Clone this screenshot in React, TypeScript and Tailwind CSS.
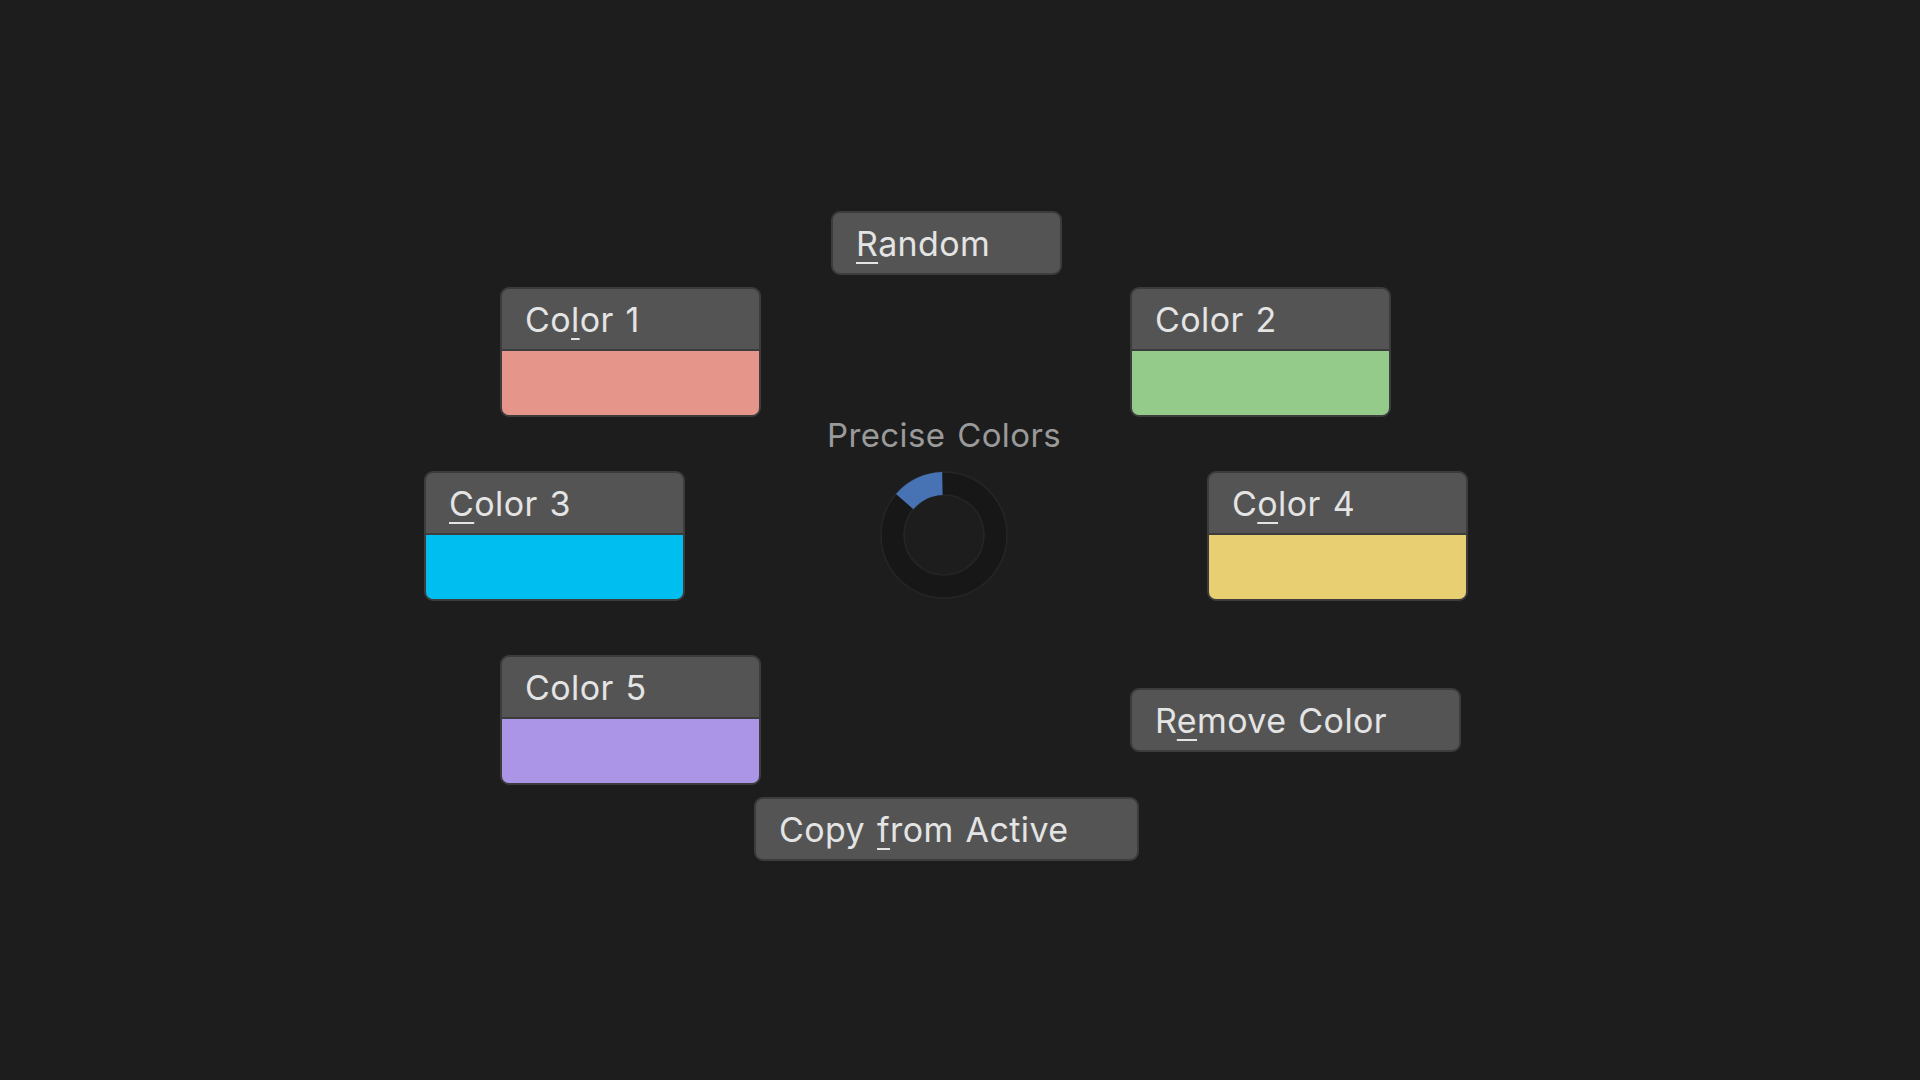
import React from "react";

type Mn = { pre: string; key: string; post: string };

// Blender-style mnemonic label: one letter underlined
const Label: React.FC<{ m: Mn }> = ({ m }) => (
  <span className="whitespace-pre tracking-[0.4px] [word-spacing:2px]">
    {m.pre}
    {m.key && (
      <span className="underline decoration-2 underline-offset-[6px]">{m.key}</span>
    )}
    {m.post}
  </span>
);

const PieButton: React.FC<{ m: Mn; className: string }> = ({ m, className }) => (
  <div
    className={`absolute flex h-[64px] items-center rounded-[9px] border-2 border-[#3c3c3c] bg-[#545454] pl-[23px] text-[34px] text-[#e4e4e4] ${className}`}
  >
    <Label m={m} />
  </div>
);

const ColorSlot: React.FC<{ m: Mn; color: string; className: string }> = ({
  m,
  color,
  className,
}) => (
  <div
    className={`absolute flex h-[130px] w-[261px] flex-col overflow-hidden rounded-[9px] border-2 border-[#3c3c3c] bg-[#545454] text-[34px] text-[#e4e4e4] ${className}`}
  >
    <div className="flex h-[62px] items-center border-b-2 border-[#3c3c3c] pl-[23px]">
      <Label m={m} />
    </div>
    <div className="flex-1" style={{ backgroundColor: color }} />
  </div>
);

export default function App() {
  return (
    <div
      className="relative h-[1080px] w-[1920px] overflow-hidden bg-[#1d1d1d]"
      style={{ fontFamily: "Inter, 'Noto Sans', sans-serif" }}
    >
      {/* pie items: positions around the pie centre are the content */}
      <PieButton m={{ pre: "", key: "R", post: "andom" }} className="left-[831px] top-[211px] w-[231px]" />

      <ColorSlot m={{ pre: "Co", key: "l", post: "or 1" }} color="#e6958a" className="left-[500px] top-[287px]" />
      <ColorSlot m={{ pre: "Color 2", key: "", post: "" }} color="#94ca8a" className="left-[1130px] top-[287px]" />
      <ColorSlot m={{ pre: "", key: "C", post: "olor 3" }} color="#00bef0" className="left-[424px] top-[471px]" />
      <ColorSlot m={{ pre: "C", key: "o", post: "lor 4" }} color="#e7cf72" className="left-[1207px] top-[471px]" />
      <ColorSlot m={{ pre: "Color 5", key: "", post: "" }} color="#aa95e6" className="left-[500px] top-[655px]" />

      <PieButton m={{ pre: "R", key: "e", post: "move Color" }} className="left-[1130px] top-[688px] w-[331px]" />
      <PieButton m={{ pre: "Copy ", key: "f", post: "rom Active" }} className="left-[754px] top-[797px] w-[385px]" />

      <div className="absolute left-[944px] top-[415px] -translate-x-1/2 whitespace-nowrap text-[33px] leading-[40px] tracking-[0.4px] [word-spacing:2px] text-[#9a9a9a]">
        Precise Colors
      </div>

      <svg className="absolute left-[879px] top-[470px]" width="130" height="130" viewBox="0 0 130 130">
        <circle cx="65" cy="65" r="51.5" fill="none" stroke="#171717" strokeWidth="23" />
        <circle cx="65" cy="65" r="63" fill="none" stroke="#262626" strokeWidth="1.5" />
        <circle cx="65" cy="65" r="40" fill="none" stroke="#262626" strokeWidth="1.5" />
        <path
          d="M 63.2 2.0 A 63 63 0 0 0 17.0 24.0 L 34.4 39.3 A 40 40 0 0 1 63.6 25.0 Z"
          fill="#4772b3"
        />
      </svg>
    </div>
  );
}
